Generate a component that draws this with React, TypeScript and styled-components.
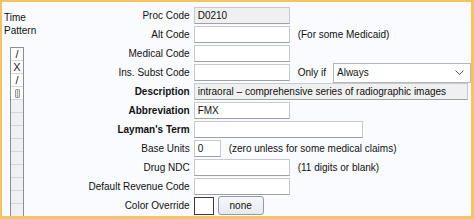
import styled, { createGlobalStyle } from "styled-components";

const GlobalStyle = createGlobalStyle`
	html, body {
		margin: 0;
		padding: 0;
		background: #ffffff;
	}
	* {
		box-sizing: border-box;
	}
`;

type Row = {
	label: string;
	bold?: boolean;
};

const patternMarks = ["/", "X", "/", "thumb"];

const App = () => {
	return (
		<>
			<GlobalStyle />
			<Window>
				<TimeColumn>
					<TimeTitle>Time<br />Pattern</TimeTitle>
					<PatternStrip>
						{Array.from({ length: 13 }).map((_, i) => (
							<PatternCell key={i} $filled={i < 4}>
								{patternMarks[i] === "thumb" ? <Thumb /> : patternMarks[i]}
							</PatternCell>
						))}
					</PatternStrip>
				</TimeColumn>
				<Form>
					<Label>Proc Code</Label>
					<Field>
						<TextBox $width={96} $readonly readOnly value="D0210" />
					</Field>

					<Label>Alt Code</Label>
					<Field>
						<TextBox $width={96} readOnly value="" />
						<Note>(For some Medicaid)</Note>
					</Field>

					<Label>Medical Code</Label>
					<Field>
						<TextBox $width={96} readOnly value="" />
					</Field>

					<Label>Ins. Subst Code</Label>
					<Field>
						<TextBox $width={96} readOnly value="" />
						<Note $gap={7}>Only if</Note>
						<Select>
							<span>Always</span>
							<svg width="9" height="5" viewBox="0 0 9 5">
								<path d="M0.5 0.5 L4.5 4.5 L8.5 0.5" fill="none" stroke="#555" strokeWidth="1" />
							</svg>
						</Select>
					</Field>

					<Label $bold>Description</Label>
					<Field>
						<TextBox
							$width={274}
							$readonly
							readOnly
							value="intraoral – comprehensive series of radiographic images"
						/>
					</Field>

					<Label $bold>Abbreviation</Label>
					<Field>
						<TextBox $width={96} readOnly value="FMX" />
					</Field>

					<Label $bold>Layman's Term</Label>
					<Field>
						<TextBox $width={169} readOnly value="" />
					</Field>

					<Label>Base Units</Label>
					<Field>
						<TextBox $width={27} readOnly value="0" />
						<Note>(zero unless for some medical claims)</Note>
					</Field>

					<Label>Drug NDC</Label>
					<Field>
						<TextBox $width={96} readOnly value="" />
						<Note>(11 digits or blank)</Note>
					</Field>

					<Label>Default Revenue Code</Label>
					<Field>
						<TextBox $width={96} readOnly value="" />
					</Field>

					<Label>Color Override</Label>
					<Field>
						<ColorSwatch />
						<NoneButton>none</NoneButton>
					</Field>
				</Form>
			</Window>
		</>
	);
};

const Window = styled.div`
	width: 474px;
	height: 219px;
	display: flex;
	border-style: solid;
	border-color: #f5c365;
	border-width: 2px 3px 3px 2px;
	background: #f9fbfe;
	font-family: "Liberation Sans", Arial, sans-serif;
	font-size: 10px;
	color: #111;
	overflow: hidden;
`;

const TimeColumn = styled.div`
	width: 60px;
	display: flex;
	flex-direction: column;
	padding: 9px 0 0 2px;
`;

const TimeTitle = styled.div`
	line-height: 13px;
`;

const PatternStrip = styled.div`
	margin: 10px 0 0 6px;
	width: 14px;
	flex: 1;
	border: 1px solid #8a8f96;
	border-bottom: none;
	background: #eef0f3;
	display: flex;
	flex-direction: column;
`;

const PatternCell = styled.div<{ $filled: boolean }>`
	height: 13px;
	flex-shrink: 0;
	display: flex;
	align-items: center;
	justify-content: center;
	border-bottom: 1px solid #d3d6da;
	background: ${({ $filled }) => ($filled ? "#ffffff" : "transparent")};
	font-size: 11px;
	line-height: 12px;
	color: #222;
`;

const Thumb = styled.span`
	width: 5px;
	height: 9px;
	border: 1px solid #9a9a9a;
	border-radius: 1px;
	background: linear-gradient(90deg, #e4e4e4 0 40%, #b0b0b0 40% 60%, #e4e4e4 60%);
`;

const Form = styled.div`
	display: grid;
	grid-template-columns: 131px auto;
	grid-auto-rows: 19px;
	column-gap: 4px;
	align-items: center;
	padding-top: 4px;
`;

const Label = styled.span<{ $bold?: boolean }>`
	text-align: right;
	white-space: nowrap;
	font-weight: ${({ $bold }) => ($bold ? 700 : 400)};
`;

const Field = styled.div`
	display: flex;
	align-items: center;
`;

const TextBox = styled.input<{ $width: number; $readonly?: boolean }>`
	width: ${({ $width }) => $width}px;
	height: 17px;
	margin: 0;
	padding: 0 3px;
	border: 1px solid #c6c9cd;
	border-bottom-color: #9da1a6;
	background: ${({ $readonly }) => ($readonly ? "#f0f0f0" : "#ffffff")};
	font-family: "Liberation Sans", Arial, sans-serif;
	font-size: 10px;
	color: #111;
	outline: none;
`;

const Note = styled.span<{ $gap?: number }>`
	margin-left: 8px;
	margin-right: ${({ $gap }) => $gap ?? 0}px;
	white-space: nowrap;
`;

const Select = styled.div`
	width: 138px;
	height: 20px;
	display: flex;
	align-items: center;
	justify-content: space-between;
	padding: 0 6px 0 3px;
	border: 1px solid #b4b7bb;
	background: #ffffff;
	margin-left: 0;
`;

const ColorSwatch = styled.div`
	width: 20px;
	height: 18px;
	border: 1px solid #3a3a3a;
	background: #ffffff;
`;

const NoneButton = styled.button`
	width: 46px;
	height: 19px;
	margin-left: 4px;
	padding: 0;
	border: 1px solid #8b9bb0;
	border-radius: 3px;
	background: linear-gradient(#f7f8fa, #e6e9ee);
	font-family: "Liberation Sans", Arial, sans-serif;
	font-size: 10px;
	color: #111;
`;

export default App;
